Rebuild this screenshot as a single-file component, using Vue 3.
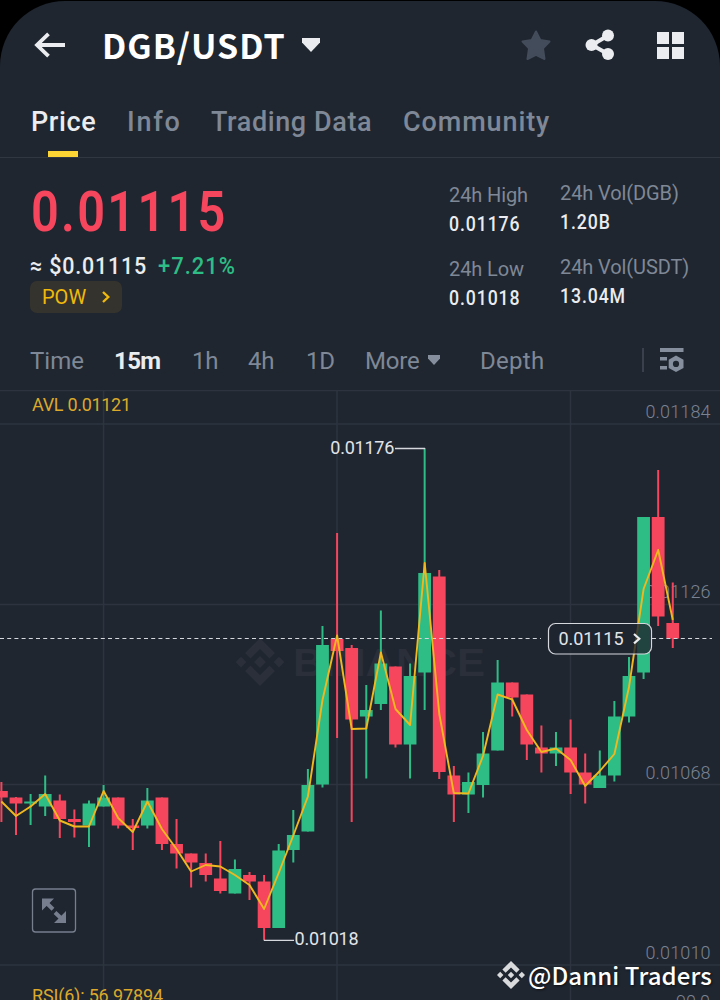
<script setup>
const tabs = [
  { label: 'Price', cls: 'tab-price' },
  { label: 'Info', cls: 'tab-info' },
  { label: 'Trading Data', cls: 'tab-trading' },
  { label: 'Community', cls: 'tab-community' }
]

const intervals = [
  { label: 'Time', cls: 'iv-time' },
  { label: '15m', cls: 'iv-active' },
  { label: '1h', cls: 'iv-1h' },
  { label: '4h', cls: 'iv-4h' },
  { label: '1D', cls: 'iv-1d' }
]

// direction, wick top, body top, body bottom, wick bottom, average line
const rows = [
  ['r', 782, 791, 797.5, 822, 801.5], ['r', 797, 797.5, 803.5, 835, 816],
  ['g', 794, 801.5, 803.5, 825, 806.5], ['g', 775.5, 794, 806.5, 816, 794],
  ['r', 794.5, 800.5, 819, 838, 820.5], ['r', 809.5, 819, 822, 837.5, 826.5],
  ['g', 800.5, 803.5, 825.5, 847, 826.5], ['g', 785, 797.5, 806.5, 806.5, 791],
  ['r', 797.5, 797.5, 825.5, 828.5, 818], ['r', 819, 825.5, 828, 850, 832],
  ['g', 788, 800.5, 825.5, 828.5, 801.5], ['r', 797.5, 797.5, 844, 850, 829],
  ['r', 819, 844, 853.5, 868.5, 849], ['r', 853.5, 853.5, 862.5, 887.5, 871.5],
  ['r', 853.5, 863, 875, 881.5, 865], ['r', 841, 878.5, 891, 893.5, 866.5],
  ['g', 859.5, 869, 893.5, 893.5, 875], ['r', 872, 875, 881.5, 900, 885],
  ['r', 875, 881.5, 928, 940.5, 909], ['g', 844, 850.5, 928, 928, 873],
  ['g', 810, 835, 850, 862.5, 835.5], ['g', 769, 785, 831.5, 831.5, 796.5],
  ['g', 626, 645, 784.5, 787.5, 700], ['r', 533, 639, 651, 738, 635.5],
  ['r', 645, 648, 719.5, 822, 729], ['g', 685, 710, 716.5, 778.5, 728.5],
  ['g', 610.5, 663.5, 704, 710, 652.5], ['r', 666.5, 666.5, 744.5, 747.5, 709],
  ['g', 663.5, 676, 744.5, 778.5, 725], ['g', 448, 573, 672.5, 710, 563],
  ['r', 570, 576.5, 772, 779, 714], ['r', 766, 775.5, 794.5, 822, 793],
  ['g', 772.5, 782, 794.5, 813, 793.5], ['g', 732, 753.5, 785, 797.5, 756],
  ['g', 660, 682.5, 750.5, 750.5, 694.5], ['r', 682.5, 682.5, 697.5, 716.5, 699.5],
  ['r', 694.5, 694.5, 744.5, 760, 730], ['r', 725.5, 747.5, 753.5, 772.5, 752],
  ['g', 732, 747.5, 753.5, 766, 748.5], ['r', 719.5, 747.5, 772.5, 794, 760],
  ['r', 753.5, 772.5, 784.5, 803.5, 786], ['g', 750.5, 775.5, 788, 788, 771],
  ['g', 701, 716.5, 775.5, 781.5, 754], ['g', 657, 676, 716.5, 722.5, 687],
  ['g', 517, 517, 672.5, 679, 589], ['r', 470, 517, 616.5, 626, 550],
  ['r', 582.5, 623, 638.5, 648, 620]
]
const candles = rows.map(([dir, high, top, bottom, low, avg], i) => ({
  x: 1.4 + i * 14.595, color: dir === 'g' ? '#2ebd85' : '#f6465d', high, top, bottom, low, avg
}))
const avgLine = candles.map(c => `${c.x.toFixed(1)},${c.avg}`).join(' ')
</script>

<template>
  <main class="screen">
    <header class="bar">
      <svg class="back" width="32" height="26" viewBox="0 0 32 26" fill="none" stroke="#eaecef" stroke-width="3.8">
        <path d="M2.5 13H31M14.5 1.8L3 13L14.5 24.2" />
      </svg>
      <h1>DGB/USDT</h1>
      <svg class="caret" width="18" height="14" viewBox="0 0 18 14"><path d="M0 0H18V4.5L9 14L0 4.5Z" fill="#eaecef" /></svg>
      <div class="actions">
        <svg width="30" height="31" viewBox="0 0 30 31"><path d="M15 1.5L19.3 10L28.5 11.5L22 18.4L23.5 29L15 24.8L6.5 29L8 18.4L1.5 11.5L10.7 10Z" fill="#434c5a" stroke="#434c5a" stroke-width="2" stroke-linejoin="round" /></svg>
        <svg class="share" width="30" height="32" viewBox="0 0 30 32" fill="#eaecef"><path d="M7 16L23 6.5M7 16L23 25" stroke="#eaecef" stroke-width="4" /><circle cx="6.5" cy="16" r="6" /><circle cx="23" cy="6.5" r="6" /><circle cx="23" cy="25" r="6" /></svg>
        <svg class="grid-icon" width="27" height="27" viewBox="0 0 27 27" fill="#eaecef"><path d="M0 0H12V12H0ZM15 0H27V12H15ZM0 15H12V27H0ZM15 15H27V27H15Z" /></svg>
      </div>
    </header>

    <nav class="tabs">
      <span v-for="t in tabs" :key="t.label" class="tab" :class="t.cls">{{ t.label }}</span>
    </nav>

    <section class="summary">
      <div class="quote">
        <div class="price">0.01115</div>
        <div class="fiat"><span class="usd">≈ $0.01115</span><span class="change">+7.21%</span></div>
        <div class="tag"><span>POW</span>
          <svg width="8" height="12" viewBox="0 0 8 12" fill="none" stroke="#f0b90b" stroke-width="2.4"><path d="M1 1L6.3 6L1 11" /></svg>
        </div>
      </div>
      <div class="stats range">
        <span class="k">24h High</span><span class="v">0.01176</span>
        <span class="k">24h Low</span><span class="v">0.01018</span>
      </div>
      <div class="stats volume">
        <span class="k">24h Vol(DGB)</span><span class="v">1.20B</span>
        <span class="k">24h Vol(USDT)</span><span class="v">13.04M</span>
      </div>
    </section>

    <nav class="intervals">
      <span v-for="t in intervals" :key="t.label" class="iv" :class="t.cls">{{ t.label }}</span>
      <span class="iv iv-more">More</span>
      <svg class="more-caret" width="12" height="10" viewBox="0 0 12 10"><path d="M0 0H12V3.5L6 10L0 3.5Z" fill="#848e9c" /></svg>
      <span class="iv iv-depth">Depth</span>
      <i class="divider"></i>
      <svg class="settings" width="24" height="24" viewBox="0 0 24 24" fill="#848e9c">
        <path d="M0 0H23.5V4H0ZM0 9H7V12.5H0ZM0 18H7V21.5H0Z" />
        <path fill-rule="evenodd" d="M16 7.5L23.5 11.7V20L16 24L8.7 20V11.7ZM16 12.8A3.1 3.1 0 1 0 16 19A3.1 3.1 0 1 0 16 12.8Z" />
      </svg>
    </nav>

    <svg class="chart" width="720" height="610" viewBox="0 390 720 610">
      <g stroke="#2d343f" stroke-width="1.5">
        <path d="M0 390.5H720M0 424H720M0 604.4H720M0 784.6H720M0 965H720M103.6 391V1000M337 391V1000M570.5 391V1000" />
      </g>
      <g fill="#2a2f39">
        <g transform="translate(260 662)">
          <path d="M0 -24L15 -9L9.5 -3.5L0 -13L-9.5 -3.5L-15 -9ZM0 24L15 9L9.5 3.5L0 13L-9.5 3.5L-15 9ZM0 -6L6 0L0 6L-6 0ZM-19 -5.5L-13.5 0L-19 5.5L-24.5 0ZM19 -5.5L24.5 0L19 5.5L13.5 0Z" />
        </g>
        <text x="293" y="675.5" class="brand" textLength="192" lengthAdjust="spacingAndGlyphs">BINANCE</text>
      </g>
      <g class="axis">
        <text x="645.5" y="418" textLength="65">0.01184</text>
        <text x="645.5" y="598" textLength="65">0.01126</text>
        <text x="645.5" y="779" textLength="65">0.01068</text>
        <text x="645.5" y="959" textLength="65">0.01010</text>
        <text x="676" y="1008" textLength="34">90.0</text>
      </g>
      <g v-for="c in candles" :key="c.x">
        <path :d="`M${c.x} ${c.high}V${c.low}`" :stroke="c.color" stroke-width="2" />
        <rect :x="c.x - 6.4" :y="c.top" width="12.8" :height="c.bottom - c.top" :fill="c.color" />
      </g>
      <path d="M0 638.5H541M652 638.5H712" stroke="#d5d8dd" stroke-width="1.2" stroke-dasharray="4 3.2" />
      <polyline :points="avgLine" fill="none" stroke="#efb81f" stroke-width="1.9" stroke-linejoin="round" />
      <path d="M395 448.5H425M264 940.3H294" stroke="#d5d8dd" stroke-width="1.3" />
      <g class="marks">
        <text x="330.3" y="454" textLength="64">0.01176</text>
        <text x="294.5" y="945" textLength="64">0.01018</text>
      </g>
      <rect x="548.5" y="623.5" width="103" height="30.5" rx="7" fill="#1f2630" fill-opacity=".8" stroke="#d5d8dd" stroke-width="1.2" />
      <text class="marks" x="558.5" y="645" textLength="65">0.01115</text>
      <path d="M634 634L639.3 638.7L634 643.4" fill="none" stroke="#eaecef" stroke-width="2.2" />
      <g class="legend">
        <text x="32" y="411" textLength="99">AVL 0.01121</text>
        <text x="32" y="1002" textLength="131">RSI(6): 56.97894</text>
      </g>
      <g fill="none" stroke="#777e8e">
        <rect x="32.5" y="889" width="43" height="43" rx="3" stroke-width="1.3" />
        <path d="M45 901.5L53 909.3M55 912.5L63 920" stroke-width="4" />
      </g>
      <path d="M42 898.5H54L42 910.5ZM66 923V911L54 923Z" fill="#777e8e" />
    </svg>

    <div class="credit">
      <svg width="28" height="28" viewBox="-14 -14 28 28" fill="#d9dadc">
        <path d="M0 -14L8.6 -5.4L5.4 -2.2L0 -7.6L-5.4 -2.2L-8.6 -5.4ZM0 14L8.6 5.4L5.4 2.2L0 7.6L-5.4 2.2L-8.6 5.4ZM0 -3.2L3.2 0L0 3.2L-3.2 0ZM-10.8 -3.2L-7.6 0L-10.8 3.2L-14 0ZM10.8 -3.2L14 0L10.8 3.2L7.6 0Z" />
      </svg>
      <span>@Danni Traders</span>
    </div>
  </main>
</template>

<style>
body { margin: 0; background: #000; overflow: hidden; }
</style>

<style scoped>
.screen {
  position: relative; width: 720px; height: 999px; margin-top: 1px; overflow: hidden;
  display: flex; flex-direction: column; background: #1f2630;
  border-radius: 65px 65px 0 0; font-family: Roboto, "Liberation Sans", sans-serif;
  color: #7f8896; white-space: nowrap;
}
.bar { height: 88px; box-sizing: border-box; padding: 0 36px 0 34px; display: flex; align-items: center; }
h1 { margin: 0 0 0 36px; width: 183px; font: 700 34px/50px "Noto Sans CJK SC", sans-serif; color: #fff; letter-spacing: 1px; }
.caret { margin-left: 17px; margin-bottom: 1px; }
.actions { margin-left: auto; display: flex; align-items: center; }
.share { margin-left: 34px; }
.grid-icon { margin-left: 42px; }
.tabs { height: 69px; box-sizing: border-box; border-bottom: 1px solid #303741; padding-left: 31px; display: flex; font-weight: 500; font-size: 27px; line-height: 66px; }
.tab { letter-spacing: .6px; }
.tab-price { position: relative; width: 96px; color: #eaecef; }
.tab-price::after { content: ""; position: absolute; left: 17px; top: 62px; width: 30px; height: 6px; background: #fcd535; }
.tab-info { width: 84px; letter-spacing: 1.8px; }
.tab-trading { width: 192px; }
.tab-community { letter-spacing: .9px; }
.summary { height: 167px; display: flex; }
.quote { box-sizing: border-box; width: 449px; padding: 24px 0 0 30px; }
.price { font-size: 56px; line-height: 60px; font-weight: 600; color: #f6465d; letter-spacing: 2.6px; transform: scaleX(.87); transform-origin: left; margin-left: 1px; }
.fiat { margin-top: 11px; font-size: 24px; line-height: 26px; font-weight: 500; display: flex; }
.usd { width: 128px; color: #eaecef; letter-spacing: .9px; transform: scaleX(.895); transform-origin: left; }
.change { color: #2ebd85; letter-spacing: 1.1px; transform: scaleX(.915); transform-origin: left; }
.tag { margin-top: 2px; width: 92px; height: 32px; box-sizing: border-box; padding: 0 12px; border-radius: 7px; background: #35332d; color: #f0b90b; font-size: 20px; display: flex; justify-content: space-between; align-items: center; }
.stats { display: flex; flex-direction: column; align-items: flex-start; font-size: 20px; line-height: 28px; }
.range { width: 111px; padding-top: 23px; }
.volume { padding-top: 21px; }
.k { letter-spacing: -.1px; }
.v { color: #eaecef; font-weight: 500; letter-spacing: 1px; transform: scaleX(.885); transform-origin: left; margin-bottom: 16px; line-height: 30px; }
.intervals { height: 65px; padding-left: 30px; display: flex; align-items: center; font-size: 24px; line-height: 40px; padding-top: 5px; box-sizing: border-box; }
.iv { letter-spacing: .3px; padding-top: 2px; }
.iv-time { width: 84px; letter-spacing: 0; }
.iv-active { width: 78px; color: #eaecef; font-weight: 700; letter-spacing: -.6px; }
.iv-1h { width: 56px; letter-spacing: -.2px; }
.iv-4h { width: 58px; letter-spacing: -.2px; }
.iv-1d { width: 59px; letter-spacing: -.3px; }
.iv-more { width: 63px; letter-spacing: -.2px; }
.iv-depth { margin-left: 40px; width: 162px; }
.divider { width: 2px; height: 24px; background: #3a414d; }
.settings { margin-left: 16px; }
.chart { display: block; flex: none; }
.brand { font: 700 38px "Liberation Sans", sans-serif; }
.axis { font-size: 18px; fill: #7b8291; font-weight: 300; }
.marks { font-size: 18px; fill: #e2e4e8; }
.legend { font-size: 18px; fill: #dca92a; }
.credit { position: absolute; left: 497px; top: 955px; display: flex; align-items: center; gap: 3px; font: 500 24px/38px "Noto Sans CJK SC", sans-serif; letter-spacing: .1px; color: #fff; text-shadow: 1px 1px 2px #111; }
</style>
